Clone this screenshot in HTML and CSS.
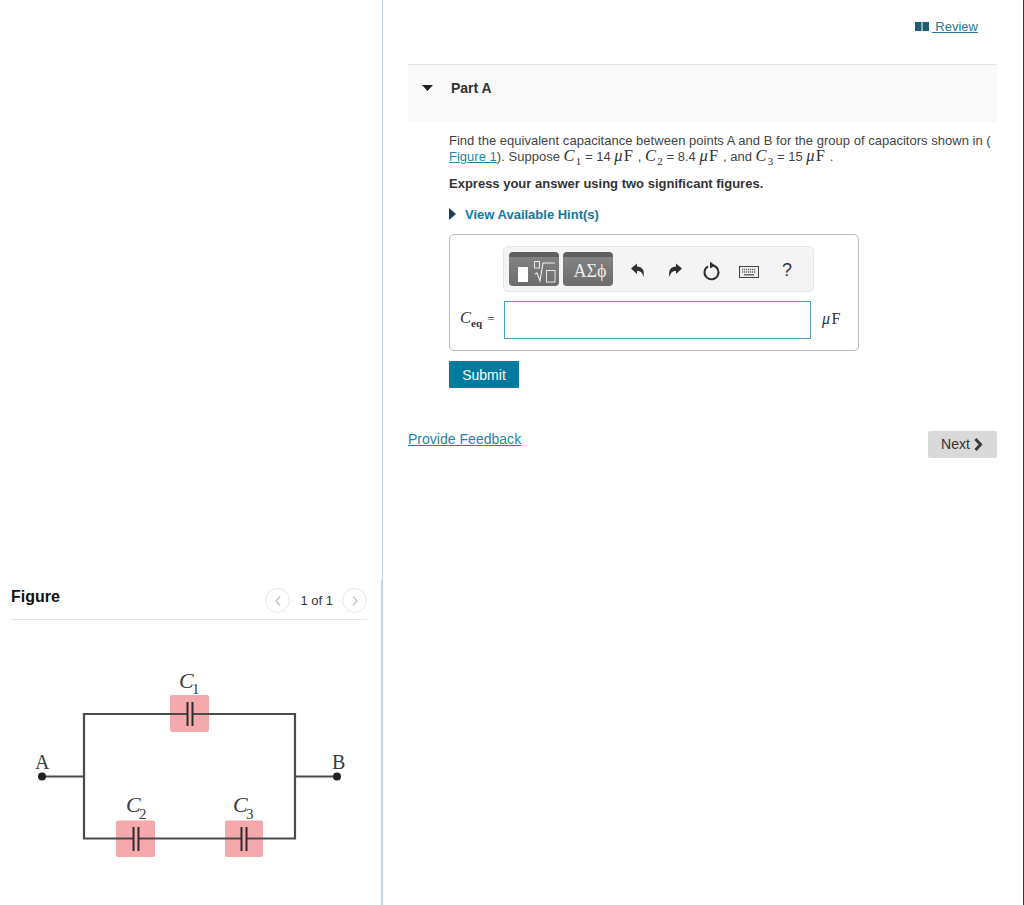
FILE: index.html
```html
<!DOCTYPE html>
<html lang="en">
<head>
<meta charset="utf-8">
<title>Part A</title>
<link rel="stylesheet" href="styles.css">
</head>
<body>
<div class="page">
  <aside class="left">
    <div class="fig-panel">
      <div class="fig-head">
        <h2 class="fig-title">Figure</h2>
        <div class="pager">
          <span class="round"><svg width="8" height="12" viewBox="0 0 8 12"><path d="M6 1.500 2 6l4 4.500" fill="none" stroke="#c4c4c4" stroke-width="1.300"/></svg></span>
          <span class="pager-text">1 of 1</span>
          <span class="round"><svg width="8" height="12" viewBox="0 0 8 12"><path d="M2 1.500 6 6l-4 4.500" fill="none" stroke="#c4c4c4" stroke-width="1.300"/></svg></span>
        </div>
      </div>
      <svg class="circuit" width="381" height="270" viewBox="0 0 381 270">
        <rect x="170" y="65" width="39" height="37" rx="2" fill="#f6a9ad"/>
        <rect x="116" y="190.500" width="39" height="36.500" rx="2" fill="#f6a9ad"/>
        <rect x="225" y="190.500" width="38" height="36.500" rx="2" fill="#f6a9ad"/>
        <path d="M42 146.500H84M84 84H295V208.500H84ZM295 146.500H337" fill="none" stroke="#4a4a4a" stroke-width="2.200"/>
        <rect x="188" y="72" width="4" height="24" fill="#f6a9ad"/>
        <rect x="134" y="197" width="4" height="24" fill="#f6a9ad"/>
        <rect x="242" y="197" width="4" height="24" fill="#f6a9ad"/>
        <path d="M187.500 72V96M192.500 72V96M133.500 197V221M138.500 197V221M241.500 197V221M246.500 197V221" stroke="#2c2c2c" stroke-width="2"/>
        <circle cx="42" cy="146.500" r="4" fill="#222"/>
        <circle cx="337" cy="146.500" r="4" fill="#222"/>
        <g class="lbl">
          <text x="179" y="58" class="cap">C</text><text x="192" y="64" class="sub">1</text>
          <text x="126" y="182" class="cap">C</text><text x="139" y="189" class="sub">2</text>
          <text x="233" y="182" class="cap">C</text><text x="246" y="189" class="sub">3</text>
          <text x="35" y="139">A</text>
          <text x="332" y="139">B</text>
        </g>
      </svg>
    </div>
  </aside>
  <main class="right">
    <div class="review-row">
      <a class="review" href="#"><svg class="book" width="14" height="9" viewBox="0 0 14 9"><path d="M0 0h6.500v9H0zM7.500 0H14v9H7.500z" fill="#1d5e74"/></svg> Review</a>
    </div>
    <section class="part-head">
      <svg width="11" height="6" viewBox="0 0 11 6"><path d="M0 0h11L5.500 6z" fill="#222"/></svg>
      <h3 class="part-title">Part A</h3>
    </section>
    <div class="body">
      <p class="question">Find the equivalent capacitance between points A and B for the group of capacitors shown in (<br><a href="#">Figure 1</a>). Suppose <span class="m"><i>C</i><sub>1</sub></span> = 14 <span class="m"><i>μ</i>F</span> , <span class="m"><i>C</i><sub>2</sub></span> = 8.4 <span class="m"><i>μ</i>F</span> , and <span class="m"><i>C</i><sub>3</sub></span> = 15 <span class="m"><i>μ</i>F</span> .</p>
      <p class="express">Express your answer using two significant figures.</p>
      <div class="hint">
        <svg width="7" height="12" viewBox="0 0 7 12"><path d="M0 0l7 6-7 6z" fill="#17405a"/></svg>
        <span>View Available Hint(s)</span>
      </div>
      <div class="answer">
        <div class="toolbar-row">
          <div class="toolbar">
            <button class="tpl tpl-root" type="button">
              <svg width="50" height="29" viewBox="0 0 50 29">
                <rect x="9" y="10" width="10" height="15" fill="#fff"/>
                <path d="M26 17l2-1 3 8 3-18h12" fill="none" stroke="#f2f2f2" stroke-width="1.100"/>
                <rect x="25.500" y="4.500" width="5" height="6.500" fill="none" stroke="#e8e8e8"/>
                <rect x="37.500" y="13.500" width="8.500" height="11.500" fill="none" stroke="#e8e8e8"/>
              </svg>
            </button>
            <button class="tpl tpl-greek" type="button">ΑΣϕ</button>
            <div class="tools">
              <svg class="t1" width="16" height="16" viewBox="0 0 16 16"><path d="M1 6.500 7 1.500V4.500C12 4.500 15 8 13.500 15 12.500 10.500 10.500 9 7 9V12Z" fill="#2f2f2f"/></svg>
              <svg class="t2" width="16" height="16" viewBox="0 0 16 16"><path d="M15 6.500 9 1.500V4.500C4 4.500 1 8 2.500 15 3.500 10.500 5.500 9 9 9V12Z" fill="#2f2f2f"/></svg>
              <svg class="t3" width="18" height="20" viewBox="0 0 18 20"><path d="M5 5.300a7 7 0 1 0 5-.800" fill="none" stroke="#2f2f2f" stroke-width="2"/><path d="M7 0.500l5 4-5 3z" fill="#2f2f2f"/></svg>
              <svg class="t4" width="20" height="12" viewBox="0 0 20 12"><rect x=".5" y=".5" width="19" height="11" fill="#eee" stroke="#444"/><path d="M3 3.500h14M3 6h14" stroke="#666" stroke-width="1.300" stroke-dasharray="1.200 .8"/><path d="M5 8.800h10" stroke="#555" stroke-width="1.300"/></svg>
              <span class="qm">?</span>
            </div>
          </div>
        </div>
        <div class="input-row">
          <span class="var"><i>C</i><sub>eq</sub> <span class="eq">=</span></span>
          <div class="field"></div>
          <span class="unit"><i>μ</i>F</span>
        </div>
      </div>
      <button class="submit" type="button">Submit</button>
    </div>
    <div class="foot">
      <a class="feedback" href="#">Provide Feedback</a>
      <button class="next" type="button">Next <svg width="11" height="13" viewBox="0 0 11 13"><path d="M2.500 1l5 5.500-5 5.500" fill="none" stroke="#3a3a3a" stroke-width="3"/></svg></button>
    </div>
  </main>
</div>
</body>
</html>
```
FILE: styles.css
```css
* { box-sizing: border-box; }
html, body { margin: 0; height: 100%; }
body { background: #fff; font-family: "Liberation Sans", Arial, sans-serif; color: #333; overflow: hidden; }
.page { display: flex; height: 905px; border-right: 1px solid #6a2233; }
.left { width: 383px; flex: none; padding-top: 580px; border-right: 1px solid #c5d6e8; }
.fig-panel { height: 325px; border-right: 1px solid #c5d3e5; }
.fig-head { display: flex; justify-content: space-between; align-items: flex-start; height: 40px; margin: 0 14px 0 11px; border-bottom: 1px solid #e5e5e5; padding-top: 7px; }
.fig-title { margin: 0; font-size: 16px; line-height: 20px; font-weight: 700; color: #111; }
.pager { display: flex; align-items: center; }
.round { width: 25px; height: 25px; border: 1px solid #e8e8e8; border-radius: 50%; display: flex; align-items: center; justify-content: center; }
.pager-text { font-size: 13px; color: #333; line-height: 27px; margin: 0 9px 0 10px; }
.circuit { display: block; margin-top: 10px; }
.lbl text { font-family: "Liberation Serif", serif; font-size: 20px; fill: #3c3c3c; }
.lbl text.cap { font-size: 22px; font-style: italic; }
.lbl text.sub { font-size: 15px; }
.right { flex: 1; min-width: 0; padding: 0 26px 0 25px; }
.review-row { height: 64px; display: flex; justify-content: flex-end; padding: 19px 19px 0 0; }
.review { font-size: 13px; line-height: 15px; height: 16px; color: #2b7a94; text-decoration: underline; white-space: pre; }
.book { margin-right: 3px; }
.part-head { height: 58px; background: #f9f9f9; border-top: 1px solid #e3e3e3; display: flex; align-items: flex-start; padding: 19px 0 0 14px; gap: 18px; }
.part-head svg { margin-top: 1px; }
.part-title { margin: -4px 0 0; font-size: 14px; line-height: 16px; font-weight: 700; color: #333; }
.body { padding-left: 41px; }
.question { margin: 11px 0 0; font-size: 13px; line-height: 16px; color: #444; white-space: nowrap; height: 32px; letter-spacing: .02px; }
.question a { color: #1f86a5; text-decoration: underline; }
.m { font-family: "Liberation Serif", serif; font-size: 16.500px; line-height: 0; color: #333; letter-spacing: 1.200px; }
.m sub { font-size: 11px; line-height: 0; letter-spacing: 0; }
.express { margin: 11px 0 0; font-size: 13px; line-height: 16px; font-weight: 700; color: #333; }
.hint { margin-top: 14px; height: 16px; display: flex; align-items: center; gap: 9px; font-size: 13px; font-weight: 700; color: #0f7a9c; }
.answer { margin-top: 12px; width: 410px; height: 117px; border: 1px solid #bdbdbd; border-radius: 5px; padding: 11px 0 0 0; }
.toolbar-row { padding-left: 53px; }
.toolbar { width: 311px; height: 46px; background: #f4f4f4; border: 1px solid #e6e6e6; border-radius: 5px; display: flex; align-items: center; padding: 0 0 0 5px; gap: 4px; }
.tpl { height: 34px; border: 0; border-top: 5px solid #5f5f5f; border-radius: 4px; background: linear-gradient(#828282, #6c6c6c); color: #eee; padding: 0; display: flex; align-items: center; justify-content: center; }
.tpl-root { width: 50px; }
.tpl-greek { width: 50px; padding-left: 4px; font-family: "Liberation Serif", serif; font-size: 18px; }
.tools { display: flex; align-items: center; margin-left: 13px; }
.t1 { margin: 2px 21px 0 0; }
.t2 { margin: 2px 20px 0 0; }
.t3 { margin: 3px 18px 0 0; }
.t4 { margin: 6px 23px 0 0; }
.qm { font-size: 18px; line-height: 20px; color: #333; margin-top: 1px; }
.input-row { display: flex; align-items: center; margin-top: 9px; }
.var { width: 54px; padding-left: 10px; font-family: "Liberation Serif", serif; font-size: 16.500px; line-height: 20px; color: #333; white-space: nowrap; margin-top: -3px; }
.var sub { font-size: 11px; font-weight: 700; line-height: 0; }
.eq { font-size: 13px; margin-left: 1px; }
.field { width: 307px; height: 38px; border: 1px solid #4a9fbd; background: #fff; }
.unit { margin-left: 11px; font-family: "Liberation Serif", serif; font-size: 16px; letter-spacing: 1.500px; color: #333; margin-top: -2px; }
.submit { display: block; margin-top: 10px; width: 70px; height: 27px; border: 0; border-radius: 1px; background: #007a9e; color: #fff; font: 14px "Liberation Sans", sans-serif; padding: 0; }
.foot { display: flex; justify-content: space-between; align-items: flex-start; margin-top: 43px; }
.feedback { font-size: 14px; line-height: 16px; color: #1f86a5; text-decoration: underline; letter-spacing: .02px; }
.next { width: 69px; height: 27px; border: 0; border-radius: 2px; background: #d9d9d9; color: #333; font: 14px "Liberation Sans", sans-serif; padding: 0 0 1px; display: flex; align-items: center; justify-content: center; gap: 3px; }
```
